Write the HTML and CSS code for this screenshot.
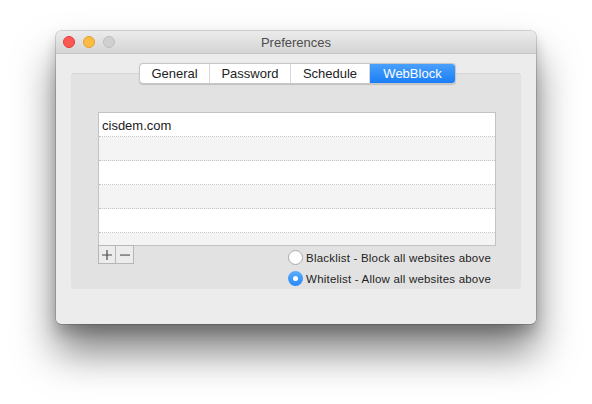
FILE: index.html
```html
<!DOCTYPE html>
<html>
<head>
<meta charset="utf-8">
<link rel="stylesheet" href="styles.css">
</head>
<body>
<div class="window">
  <div class="titlebar">
    <div class="lights">
      <span class="light red"></span>
      <span class="light yellow"></span>
      <span class="light grey"></span>
    </div>
    <div class="title">Preferences</div>
  </div>
  <div class="content">
    <div class="groupbox">
      <div class="tabs">
        <div class="tab">General</div>
        <div class="tab">Password</div>
        <div class="tab">Schedule</div>
        <div class="tab active">WebBlock</div>
      </div>
      <div class="table">
        <div class="row">cisdem.com</div>
        <div class="row alt"></div>
        <div class="row"></div>
        <div class="row alt"></div>
        <div class="row"></div>
        <div class="row alt last"></div>
      </div>
      <div class="bottom">
        <div class="buttons">
          <div class="btn">
            <svg width="12" height="12" viewBox="0 0 12 12"><path d="M6 1v10M1 6h10" stroke="#4a4a4a" stroke-width="1.2"/></svg>
          </div>
          <div class="btn">
            <svg width="12" height="12" viewBox="0 0 12 12"><path d="M1 6h10" stroke="#4a4a4a" stroke-width="1.2"/></svg>
          </div>
        </div>
        <div class="radios">
          <div class="radio-row"><span class="radio"></span><span class="label">Blacklist - Block all websites above</span></div>
          <div class="radio-row"><span class="radio on"></span><span class="label">Whitelist - Allow all websites above</span></div>
        </div>
      </div>
    </div>
  </div>
</div>
</body>
</html>
```
FILE: styles.css
```css
html, body {
  margin: 0;
  padding: 0;
  background: #ffffff;
}
body {
  font-family: "Liberation Sans", Arial, sans-serif;
  width: 592px;
  height: 404px;
  overflow: hidden;
}
.window {
  margin: 31px 0 0 56px;
  width: 480px;
  height: 293px;
  background: #ececec;
  border-radius: 5px;
  box-shadow: 0 0 0 0.5px rgba(0,0,0,0.3), 0 28px 40px rgba(0,0,0,0.5), 0 8px 14px rgba(0,0,0,0.2);
  overflow: hidden;
  display: flex;
  flex-direction: column;
}
.titlebar {
  height: 22px;
  border-bottom: 1px solid #c4c4c4;
  background: linear-gradient(#ebebeb, #d5d5d5);
  display: flex;
  align-items: center;
  position: relative;
}
.lights {
  display: flex;
  gap: 8px;
  padding-left: 7px;
  z-index: 1;
}
.light {
  width: 12px;
  height: 12px;
  border-radius: 50%;
  box-sizing: border-box;
}
.red { background: #fc5753; border: 0.5px solid #df3d38; }
.yellow { background: #fdbc40; border: 0.5px solid #de9f34; }
.grey { background: #d0d0d0; border: 0.5px solid #bdbdbd; }
.title {
  position: absolute;
  left: 0;
  right: 0;
  text-align: center;
  font-size: 13px;
  color: #4d4d4d;
}
.content {
  padding: 19px 15px 0 15px;
}
.groupbox {
  height: 215px;
  background: #e2e2e2;
  border-top: 1px solid #d6d6d6;
  border-radius: 4px;
  display: flex;
  flex-direction: column;
  padding: 0 25px 0 27px;
}
.tabs {
  align-self: center;
  margin-top: -11px;
  margin-left: 1px;
  display: flex;
  height: 21px;
  box-sizing: border-box;
  border: 1px solid #c6c6c6;
  border-radius: 4px;
  background: #ffffff;
  box-shadow: 0 0.5px 1px rgba(0,0,0,0.15);
  overflow: hidden;
}
.tab {
  font-size: 13px;
  color: #222;
  display: flex;
  align-items: center;
  justify-content: center;
  height: 100%;
  border-right: 1px solid #d8d8d8;
}
.tab:nth-child(1) { width: 69px; }
.tab:nth-child(2) { width: 80px; }
.tab:nth-child(3) { width: 78px; }
.tab.active {
  width: 85px;
  border-right: none;
  color: #ffffff;
  background: linear-gradient(#4aa0fb, #1a7ef7);
}
.table {
  margin-top: 28px;
  width: 398px;
  height: 134px;
  box-sizing: border-box;
  border: 1px solid #c3c3c3;
  background: #ffffff;
  overflow: hidden;
}
.row {
  height: 24px;
  box-sizing: border-box;
  border-bottom: 1px dotted #c4c4c4;
  font-size: 13px;
  color: #1a1a1a;
  padding-left: 3px;
  display: flex;
  align-items: center;
  line-height: 1;
  padding-top: 1px;
}
.row.alt { background: #f4f4f4; }
.row.last { border-bottom: none; }
.bottom {
  display: flex;
  justify-content: space-between;
  margin-top: -1px;
}
.buttons {
  display: flex;
  height: 19px;
  align-self: flex-start;
}
.btn {
  width: 18px;
  height: 19px;
  box-sizing: border-box;
  border: 1px solid #b7b7b7;
  background: #ececec;
  display: flex;
  align-items: center;
  justify-content: center;
}
.btn + .btn {
  border-left: none;
  width: 18px;
}
.radios {
  display: flex;
  flex-direction: column;
  gap: 6px;
  padding-top: 5px;
  margin-right: 5px;
}
.radio-row {
  display: flex;
  align-items: center;
  gap: 3px;
  height: 15px;
}
.radio {
  width: 15px;
  height: 15px;
  box-sizing: border-box;
  border-radius: 50%;
  border: 1px solid #a9a9a9;
  background: #ffffff;
  display: flex;
  align-items: center;
  justify-content: center;
}
.radio.on {
  border: none;
  background: linear-gradient(#5aaefc, #2a87f7);
}
.radio.on::after {
  content: "";
  width: 5px;
  height: 5px;
  border-radius: 50%;
  background: #ffffff;
}
.label {
  font-size: 11.5px;
  color: #222;
  letter-spacing: 0.2px;
}
```
